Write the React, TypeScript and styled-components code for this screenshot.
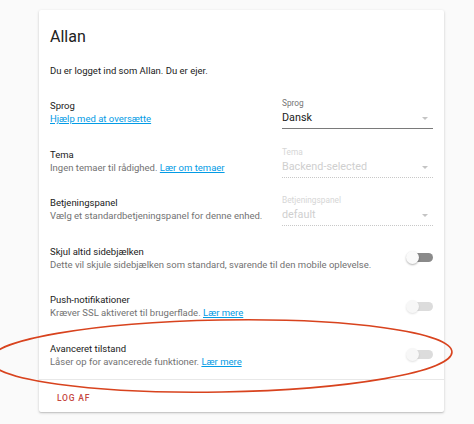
import * as React from 'react';
import styled, { createGlobalStyle } from 'styled-components';

const GlobalStyle = createGlobalStyle`
  html, body {
    margin: 0;
    padding: 0;
    background: #fafafa;
    font-family: Roboto, "Noto Sans", "Liberation Sans", sans-serif;
    -webkit-font-smoothing: antialiased;
  }
`;

const Page = styled.div`
  position: relative;
  width: 474px;
  height: 424px;
  padding-top: 10px;
  box-sizing: border-box;
  overflow: hidden;
`;

const Card = styled.div`
  margin-left: 39px;
  width: 405px;
  background: #fff;
  border-radius: 2px;
  box-shadow: 0 1px 3px rgba(0, 0, 0, 0.18), 0 1px 1px rgba(0, 0, 0, 0.1);
`;

const Header = styled.div`
  padding: 17px 11px 0;
  font-size: 16px;
  line-height: 20px;
  color: #212121;
`;

const Intro = styled.div`
  padding: 17px 11px 10px;
  font-size: 9.5px;
  line-height: 14px;
  color: #212121;
`;

const Row = styled.div`
  display: flex;
  align-items: center;
  height: 48.5px;
  padding: 0 11px;
`;

const Info = styled.div`
  flex: 1;
  min-width: 0;
`;

const Title = styled.div`
  font-size: 9.5px;
  line-height: 13px;
  color: #212121;
`;

const Desc = styled.div`
  font-size: 9.5px;
  line-height: 13px;
  color: #727272;
`;

const Link = styled.a`
  color: #039be5;
  text-decoration: underline;
`;

const Select = styled.div<{ $disabled?: boolean }>`
  width: 151px;
  display: flex;
  flex-direction: column;
  margin-top: 3px;
  color: ${p => (p.$disabled ? '#cfcfcf' : '#212121')};
`;

const SelectLabel = styled.div<{ $disabled?: boolean }>`
  font-size: 8.3px;
  line-height: 10px;
  color: ${p => (p.$disabled ? '#d6d6d6' : '#757575')};
`;

const SelectValue = styled.div<{ $disabled?: boolean }>`
  position: relative;
  font-size: 10.8px;
  line-height: 15px;
  padding: 2px 0 3px;
  border-bottom: 1px ${p => (p.$disabled ? 'dotted #c8c8c8' : 'solid #7a7a7a')};
`;

const Arrow = styled.span`
  position: absolute;
  right: 5px;
  top: 9px;
  width: 0;
  height: 0;
  border-left: 3px solid transparent;
  border-right: 3px solid transparent;
  border-top: 3px solid #c4c4c4;
`;

const Toggle = styled.div<{ $disabled?: boolean }>`
  position: relative;
  width: 27px;
  height: 13px;

  &::before {
    content: '';
    position: absolute;
    right: 0;
    top: 2px;
    width: 22px;
    height: 9px;
    border-radius: 5px;
    background: ${p => (p.$disabled ? '#dcdcdc' : '#8a8a8a')};
  }

  &::after {
    content: '';
    position: absolute;
    left: 0;
    top: 0;
    width: 13px;
    height: 13px;
    border-radius: 50%;
    background: ${p => (p.$disabled ? '#f7f7f7' : '#fafafa')};
    box-shadow: ${p =>
      p.$disabled ? '0 1px 2px rgba(0,0,0,0.12)' : '0 1px 2px rgba(0,0,0,0.3)'};
  }
`;

const Actions = styled.div`
  border-top: 1px solid #e8e8e8;
  height: 33px;
  display: flex;
  align-items: center;
  padding: 3px 0 0 18px;
  box-sizing: border-box;
`;

const LogOut = styled.span`
  font-size: 8.5px;
  font-weight: 500;
  letter-spacing: 0.8px;
  color: #c5473f;
`;

const Annotation = styled.svg`
  position: absolute;
  left: 0;
  top: 0;
  pointer-events: none;
`;

const SelectField = ({ label, value, disabled }: { label: string; value: string; disabled?: boolean }) => (
  <Select $disabled={disabled}>
    <SelectLabel $disabled={disabled}>{label}</SelectLabel>
    <SelectValue $disabled={disabled}>
      {value}
      <Arrow />
    </SelectValue>
  </Select>
);

export default function App() {
  return (
    <Page>
      <GlobalStyle />
      <Card>
        <Header>Allan</Header>
        <Intro>Du er logget ind som Allan. Du er ejer.</Intro>

        <Row>
          <Info>
            <Title>Sprog</Title>
            <Desc>
              <Link>Hjælp med at oversætte</Link>
            </Desc>
          </Info>
          <SelectField label="Sprog" value="Dansk" />
        </Row>

        <Row>
          <Info>
            <Title>Tema</Title>
            <Desc>
              Ingen temaer til rådighed. <Link>Lær om temaer</Link>
            </Desc>
          </Info>
          <SelectField label="Tema" value="Backend-selected" disabled />
        </Row>

        <Row>
          <Info>
            <Title>Betjeningspanel</Title>
            <Desc>Vælg et standardbetjeningspanel for denne enhed.</Desc>
          </Info>
          <SelectField label="Betjeningspanel" value="default" disabled />
        </Row>

        <Row>
          <Info>
            <Title>Skjul altid sidebjælken</Title>
            <Desc>Dette vil skjule sidebjælken som standard, svarende til den mobile oplevelse.</Desc>
          </Info>
          <Toggle />
        </Row>

        <Row>
          <Info>
            <Title>Push-notifikationer</Title>
            <Desc>
              Kræver SSL aktiveret til brugerflade. <Link>Lær mere</Link>
            </Desc>
          </Info>
          <Toggle $disabled />
        </Row>

        <Row>
          <Info>
            <Title>Avanceret tilstand</Title>
            <Desc>
              Låser op for avancerede funktioner. <Link>Lær mere</Link>
            </Desc>
          </Info>
          <Toggle $disabled />
        </Row>

        <Actions>
          <LogOut>LOG AF</LogOut>
        </Actions>
      </Card>

      <Annotation width="474" height="424" viewBox="0 0 474 424">
        <ellipse
          cx="221"
          cy="356"
          rx="231"
          ry="36"
          transform="rotate(-1 221 356)"
          fill="none"
          stroke="#d8431e"
          strokeWidth="1.6"
        />
      </Annotation>
    </Page>
  );
}
